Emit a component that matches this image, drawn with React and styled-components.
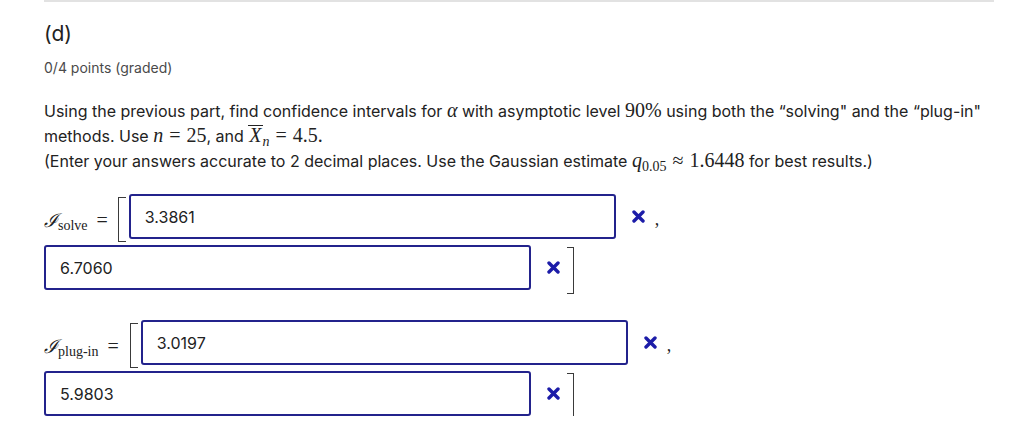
import styled, { createGlobalStyle } from "styled-components";

const GlobalStyle = createGlobalStyle`
  html, body {
    margin: 0;
    padding: 0;
    background: #ffffff;
  }
  body {
    font-family: "Inter", "Noto Sans", sans-serif;
    color: #1f1f1f;
  }
`;

const Page = styled.main`
  width: 950px;
  margin-left: 44px;
`;

const TopRule = styled.div`
  height: 2px;
  background: #e2e2e2;
`;

const PartTitle = styled.h3`
  margin: 20px 0 0;
  font-size: 21px;
  font-weight: 400;
  line-height: 24px;
  color: #222;
`;

const Points = styled.div`
  margin-top: 12px;
  font-size: 14px;
  line-height: 20px;
  color: #4a4a4a;
`;

const Problem = styled.div`
  margin-top: 20px;
  font-size: 16px;
  color: #222;
`;

const Line = styled.div`
  height: ${(p) => p.$h}px;
  line-height: ${(p) => p.$h}px;
  white-space: nowrap;
`;

const Mi = styled.span`
  font-family: "Liberation Serif", "DejaVu Serif", serif;
  font-style: italic;
  font-size: 20px;
`;

const Mn = styled.span`
  font-family: "Liberation Serif", "DejaVu Serif", serif;
  font-size: 20px;
  margin: 0 ${(p) => p.$space || 0}px;
`;

const Bar = styled.span`
  display: inline-block;
  border-top: 1px solid #222;
  line-height: 18px;
  padding: 0 1px;
`;

const Sub = styled.sub`
  font-family: "Liberation Serif", "DejaVu Serif", serif;
  font-size: ${(p) => p.$size || 14}px;
  font-style: ${(p) => (p.$italic ? "italic" : "normal")};
  vertical-align: -4px;
  line-height: 0;
`;

const Answers = styled.div`
  margin-top: 23px;
  display: flex;
  flex-direction: column;
`;

const Row = styled.div`
  display: flex;
  align-items: center;
  height: 45px;
  margin-top: ${(p) => p.$top || 0}px;
`;

const Label = styled.span`
  display: flex;
  align-items: baseline;
  font-family: "Liberation Serif", "DejaVu Serif", serif;
  font-size: 20px;
  color: #222;
  margin-top: 6px;
`;

const Script = styled.span`
  font-family: "DejaVu Serif", "Liberation Serif", serif;
  font-style: italic;
  font-size: 19px;
`;

const LabelSub = styled.span`
  font-size: 14px;
  position: relative;
  top: 3px;
  margin-left: 0;
`;

const Equals = styled.span`
  margin: 0 ${(p) => p.$right}px 0 9px;
`;

const BracketL = styled.span`
  width: 8px;
  height: 45px;
  border: 1.5px solid #3a3a3a;
  border-right: none;
  margin: 6px 3px 0 0;
  box-sizing: border-box;
`;

const BracketR = styled.span`
  width: 7px;
  height: 47px;
  border: 1.5px solid #3a3a3a;
  border-left: none;
  margin: 6px 0 0 7px;
  box-sizing: border-box;
`;

const Field = styled.input`
  box-sizing: border-box;
  width: 487px;
  height: 45px;
  border: 2px solid #23238c;
  border-radius: 3px;
  padding: 0 0 0 14px;
  font-family: "Inter", "Noto Sans", sans-serif;
  font-size: 16px;
  color: #222;
  background: #fff;
  outline: none;
`;

const Mark = styled.svg`
  width: 13px;
  height: 13px;
  margin-left: 16px;
  flex: none;
`;

const Comma = styled.span`
  font-family: "Liberation Serif", serif;
  font-size: 18px;
  margin: 6px 0 0 10px;
  color: #222;
`;

const Cross = () => (
  <Mark viewBox="0 0 13 13">
    <path d="M2 2 L11 11 M11 2 L2 11" stroke="#1c1ca8" strokeWidth="3.4" strokeLinecap="round" />
  </Mark>
);

const Interval = ({ name, lower, upper, eqRight, top }) => (
  <>
    <Row $top={top}>
      <Label>
        <Script>ℐ</Script>
        <LabelSub>{name}</LabelSub>
        <Equals $right={eqRight}>=</Equals>
      </Label>
      <BracketL />
      <Field readOnly defaultValue={lower} />
      <Cross />
      <Comma>,</Comma>
    </Row>
    <Row $top={6}>
      <Field readOnly defaultValue={upper} />
      <Cross />
      <BracketR />
    </Row>
  </>
);

export default function App() {
  return (
    <>
      <GlobalStyle />
      <Page>
        <TopRule />
        <PartTitle>(d)</PartTitle>
        <Points>0/4 points (graded)</Points>
        <Problem>
          <Line $h={24}>
            Using the previous part, find confidence intervals for <Mi>α</Mi> with asymptotic level{" "}
            <Mn>90%</Mn> using both the “solving" and the “plug-in"
          </Line>
          <Line $h={27}>
            methods. Use <Mi>n</Mi>
            <Mn $space={6}>=</Mn>
            <Mn>25</Mn>, and{" "}
            <Bar>
              <Mi>X</Mi>
            </Bar>
            <Sub $italic>n</Sub>
            <Mn $space={6}>=</Mn>
            <Mn>4.5</Mn>
            <Mn>.</Mn>
          </Line>
          <Line $h={22}>
            (Enter your answers accurate to 2 decimal places. Use the Gaussian estimate <Mi>q</Mi>
            <Sub>0.05</Sub>
            <Mn $space={6}>≈</Mn>
            <Mn>1.6448</Mn> for best results.)
          </Line>
        </Problem>
        <Answers>
          <Interval name="solve" lower="3.3861" upper="6.7060" eqRight={10} top={0} />
          <Interval name="plug-in" lower="3.0197" upper="5.9803" eqRight={11} top={30} />
        </Answers>
      </Page>
    </>
  );
}
